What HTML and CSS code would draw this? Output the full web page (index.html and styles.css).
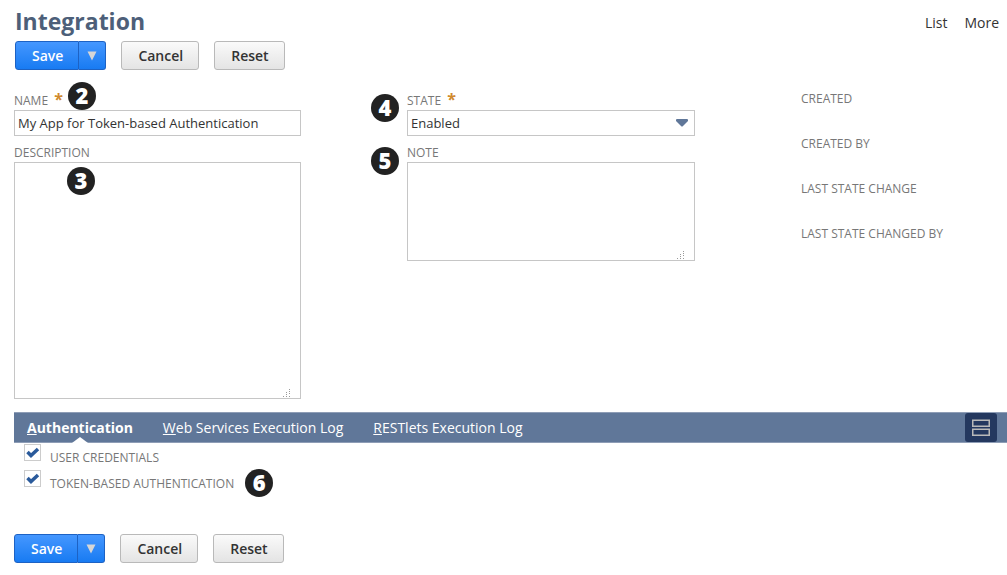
FILE: index.html
```html
<!DOCTYPE html>
<html lang="en">
<head>
<meta charset="utf-8">
<title>Integration</title>
<meta name="viewport" content="width=device-width, initial-scale=1">
<link rel="stylesheet" href="styles.css">
</head>
<body>
<form class="page">
  <header class="header">
    <div class="title-row">
      <h1 class="title">Integration</h1>
      <nav class="links"><a href="#list">List</a><a href="#more">More</a></nav>
    </div>
    <div class="actions">
      <div class="split">
        <button type="submit" class="btn btn-primary">Save</button>
        <button type="button" class="btn btn-primary btn-menu" aria-label="More save options"><svg width="10" height="10" viewBox="0 0 10 10"><path d="M0.5 0.5h9L5 9.5z"/></svg></button>
      </div>
      <button type="button" class="btn">Cancel</button>
      <button type="reset" class="btn">Reset</button>
    </div>
  </header>

  <main class="fields">
    <div class="column">
      <div class="field">
        <label class="label" for="name">NAME <span class="required">*</span></label>
        <span class="callout callout-name">2</span>
        <input class="control" id="name" type="text" value="My App for Token-based Authentication">
      </div>
      <div class="field">
        <label class="label" for="description">DESCRIPTION</label>
        <span class="callout callout-description">3</span>
        <textarea class="control area area-tall" id="description"></textarea>
        <svg class="grip" width="8" height="8" viewBox="0 0 8 8"><path d="M6 0h1v1h-1zM6 2h1v1h-1zM3 3h1v1h-1zM6 4h1v1h-1zM3 5h1v1h-1zM0 7h1v1h-1zM3 7h1v1h-1zM6 7h1v1h-1z"/></svg>
      </div>
    </div>
    <div class="column">
      <div class="field">
        <label class="label" for="state">STATE <span class="required">*</span></label>
        <span class="callout callout-state">4</span>
        <select class="control" id="state"><option>Enabled</option></select>
        <svg class="arrow" width="12" height="8" viewBox="0 0 12 8"><path d="M1 0h10q1 0 1 1v1L7 7q-1 1-2 0L0 2V1q0-1 1-1z"/></svg>
      </div>
      <div class="field">
        <label class="label" for="note">NOTE</label>
        <span class="callout callout-note">5</span>
        <textarea class="control area" id="note"></textarea>
        <svg class="grip" width="8" height="8" viewBox="0 0 8 8"><path d="M6 0h1v1h-1zM6 2h1v1h-1zM3 3h1v1h-1zM6 4h1v1h-1zM3 5h1v1h-1zM0 7h1v1h-1zM3 7h1v1h-1zM6 7h1v1h-1z"/></svg>
      </div>
    </div>
    <div class="meta">
      <div>CREATED</div>
      <div>CREATED BY</div>
      <div>LAST STATE CHANGE</div>
      <div>LAST STATE CHANGED BY</div>
    </div>
  </main>

  <section class="subtabs">
    <nav class="tabs">
      <a class="tab tab-active" href="#authentication"><u>A</u>uthentication</a>
      <a class="tab" href="#web-services"><u>W</u>eb Services Execution Log</a>
      <a class="tab" href="#restlets"><u>R</u>ESTlets Execution Log</a>
      <button type="button" class="layout-toggle" aria-label="Change tab layout"><svg width="18" height="18" viewBox="0 0 18 18"><path d="M.75 1.25h16.5v6H.75zM.75 10.25h16.5v6H.75z"/></svg></button>
    </nav>
    <div class="checks">
      <label class="check"><input type="checkbox" checked><span>USER CREDENTIALS</span></label>
      <label class="check"><input type="checkbox" checked><span>TOKEN-BASED AUTHENTICATION</span><span class="callout callout-token">6</span></label>
    </div>
  </section>

  <footer class="actions">
    <div class="split">
      <button type="submit" class="btn btn-primary">Save</button>
      <button type="button" class="btn btn-primary btn-menu" aria-label="More save options"><svg width="10" height="10" viewBox="0 0 10 10"><path d="M0.5 0.5h9L5 9.5z"/></svg></button>
    </div>
    <button type="button" class="btn">Cancel</button>
    <button type="reset" class="btn">Reset</button>
  </footer>
</form>
</body>
</html>
```
FILE: styles.css
```css
* { box-sizing: border-box; }

body {
  margin: 0;
  background: #fff;
  color: #333;
  font: 14px/20px "Open Sans", "Noto Sans", sans-serif;
}

.page { padding: 5px 0 12px 14px; }

.header { padding: 0 8px 0 1px; }

.title-row {
  display: flex;
  justify-content: space-between;
  height: 36px;
}

.title {
  margin: 0;
  color: #4d5f79;
  font-size: 23px;
  line-height: 32px;
}

.links { display: flex; gap: 17px; line-height: 36px; }
.links a { color: #333; text-decoration: none; }

.actions { display: flex; gap: 15px; }
.split { display: flex; }

.btn {
  height: 29px;
  padding: 0 15px 0 16px;
  border: 1px solid #b9b9b9;
  border-radius: 3px;
  background: linear-gradient(#fafafa, #e4e4e4);
  color: #333;
  font: 600 14px/20px "Open Sans", "Noto Sans", sans-serif;
}

.btn-primary {
  border-color: #1d62c4;
  border-radius: 3px 0 0 3px;
  background: linear-gradient(#4597ff, #187bf2);
  color: #fff;
}

.btn-menu {
  display: flex;
  align-items: center;
  padding: 0 8px;
  border-left: 0;
  border-radius: 0 3px 3px 0;
}
.btn-menu svg { fill: #d6d6d6; }

.fields {
  display: grid;
  grid-template-columns: 393fr 394fr 206fr;
  padding-top: 20px;
}

.column {
  display: flex;
  flex-direction: column;
  gap: 6px;
  width: 73%;
}

.field { position: relative; }

.label {
  display: block;
  height: 20px;
  color: #777;
  font-size: 12px;
  line-height: 22px;
}

.required {
  margin-left: 3px;
  color: #d08a2e;
  font-size: 16px;
  font-weight: 700;
  line-height: 16px;
}

.control {
  display: block;
  width: 100%;
  height: 26px;
  padding: 0 3px;
  border: 1px solid #c6c6c6;
  border-radius: 0;
  background: #fff;
  color: #333;
  font: 13px/20px "Open Sans", "Noto Sans", sans-serif;
  appearance: none;
}

.area { height: 99px; resize: none; }
.area-tall { height: 237px; }

.grip { position: absolute; right: 10px; bottom: 2px; fill: #999; }
.arrow { position: absolute; right: 7px; bottom: 9px; fill: #607799; pointer-events: none; }

.callout {
  display: flex;
  align-items: center;
  justify-content: center;
  width: 28px;
  height: 28px;
  border-radius: 50%;
  background: #222;
  color: #fff;
  font-size: 22px;
  font-weight: 800;
  line-height: 26px;
  padding-bottom: 2px;
}

.callout-name { position: absolute; left: 54px; top: -8px; }
.callout-description { position: absolute; left: 53px; top: 25px; }
.callout-state { position: absolute; left: -36px; top: 4px; }
.callout-note { position: absolute; left: -36px; top: 5px; }

.meta {
  display: flex;
  flex-direction: column;
  gap: 25px;
  margin-top: -1px;
  color: #777;
  font-size: 12px;
  white-space: nowrap;
}

.tabs {
  display: flex;
  align-items: stretch;
  gap: 30px;
  height: 31px;
  margin-top: 13px;
  padding: 0 10px 0 13px;
  border-top: 1px solid #8e9db6;
  border-bottom: 1px solid #8e9db6;
  background: #607799;
}

.tab {
  position: relative;
  color: #fff;
  line-height: 29px;
  text-decoration: none;
}
.tab-active { font-weight: 700; }
.tab-active::after {
  content: "";
  position: absolute;
  left: 50%;
  bottom: -1px;
  margin-left: -8px;
  border: solid transparent;
  border-width: 0 8px 6px;
  border-bottom-color: #fff;
}

.layout-toggle {
  display: flex;
  align-items: center;
  justify-content: center;
  width: 32px;
  margin-left: auto;
  padding: 0;
  border: 0;
  border-radius: 3px;
  background: #24385f;
}
.layout-toggle svg { fill: none; stroke: #b9b9b9; stroke-width: 1.5; }

.checks { padding: 1px 0 0 10px; }

.check {
  display: flex;
  align-items: center;
  gap: 9px;
  height: 26px;
  color: #777;
  font-size: 12px;
}
.check span:not(.callout) { padding-top: 1px; }
.check .callout { margin-left: 2px; }

.check input {
  align-self: flex-start;
  width: 17px;
  height: 17px;
  margin: 0;
  border: 1px solid #ccc;
  appearance: none;
}
.check input:checked {
  background: url("data:image/svg+xml,%3Csvg xmlns='http://www.w3.org/2000/svg' viewBox='0 0 15 15'%3E%3Cpath d='M2.5 7l3.5 3.5L13 4' fill='none' stroke='%232a5a9b' stroke-width='3.5'/%3E%3C/svg%3E") center / 15px 15px no-repeat;
}

footer.actions { margin-top: 38px; }
```
